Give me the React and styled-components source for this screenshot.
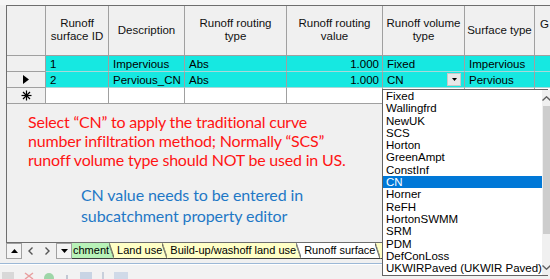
import styled, { createGlobalStyle } from "styled-components";

const GlobalStyle = createGlobalStyle`
  html, body { margin: 0; padding: 0; }
  body { background: #f0f0f0; }
`;

const COLS = "39px 63px 76px 102px 96px 82px 70px 80px";

const headers = [
  [],
  ["Runoff", "surface ID"],
  ["Description"],
  ["Runoff routing", "type"],
  ["Runoff routing", "value"],
  ["Runoff volume", "type"],
  ["Surface type"],
];

const rows = [
  { id: "1", desc: "Impervious", routing: "Abs", value: "1.000", volume: "Fixed", surface: "Impervious" },
  { id: "2", desc: "Pervious_CN", routing: "Abs", value: "1.000", volume: "CN", surface: "Pervious", current: true },
];

const volumeTypes = [
  "Fixed", "Wallingfrd", "NewUK", "SCS", "Horton", "GreenAmpt", "ConstInf", "CN",
  "Horner", "ReFH", "HortonSWMM", "SRM", "PDM", "DefConLoss", "UKWIRPaved (UKWIR Paved)",
];

const tabs = [
  { label: "chment", bg: "#b8f2b8", first: true },
  { label: "Land use", bg: "#ffffc6" },
  { label: "Build-up/washoff land use", bg: "#ffffc6" },
  { label: "Runoff surface", bg: "#ffffff" },
  { label: "", bg: "#ffffc6", hidden: true },
];

export default function App() {
  return (
    <Root>
      <GlobalStyle />
      <TopStrip />
      <GridFrame>
        <Table>
          {headers.map((lines, i) => (
            <HeadCell key={i}>
              {lines.map((l) => (
                <HeadLine key={l}>{l}</HeadLine>
              ))}
            </HeadCell>
          ))}
          <HeadCell $edge>G</HeadCell>

          {rows.map((r) => [
            <RowHead key={r.id + "h"}>
              {r.current && (
                <svg width="6" height="9" viewBox="0 0 6 9">
                  <path d="M0 0 L6 4.5 L0 9 Z" fill="#000" />
                </svg>
              )}
            </RowHead>,
            <Cell key={r.id + "a"}>{r.id}</Cell>,
            <Cell key={r.id + "b"}>{r.desc}</Cell>,
            <Cell key={r.id + "c"}>{r.routing}</Cell>,
            <Cell key={r.id + "d"} $right>{r.value}</Cell>,
            <Cell key={r.id + "e"}>
              {r.volume}
              {r.current && (
                <DropButton>
                  <svg width="5" height="3" viewBox="0 0 5 3">
                    <path d="M0 0 L5 0 L2.5 3 Z" fill="#000" />
                  </svg>
                </DropButton>
              )}
            </Cell>,
            <Cell key={r.id + "f"}>{r.surface}</Cell>,
            <Cell key={r.id + "g"} />,
          ])}

          <RowHead>
            <svg width="11" height="11" viewBox="0 0 11 11">
              <g stroke="#000" strokeWidth="1.2">
                <line x1="5.5" y1="0.5" x2="5.5" y2="10.5" />
                <line x1="0.5" y1="5.5" x2="10.5" y2="5.5" />
                <line x1="2" y1="2" x2="9" y2="9" />
                <line x1="9" y1="2" x2="2" y2="9" />
              </g>
            </svg>
          </RowHead>
          {[0, 1, 2, 3, 4, 5, 6].map((i) => (
            <Cell key={"n" + i} $blank />
          ))}
        </Table>

        <NotesArea>
          <RedNote>
            Select “CN” to apply the traditional curve
            <br />
            number infiltration method; Normally “SCS”
            <br />
            runoff volume type should NOT be used in US.
          </RedNote>
          <BlueNote>
            CN value needs to be entered in
            <br />
            subcatchment property editor
          </BlueNote>
        </NotesArea>
      </GridFrame>

      <TabBar>
        <NavBox>
          <svg width="7" height="4" viewBox="0 0 7 4">
            <path d="M0 4 L7 4 L3.5 0 Z" fill="#000" />
          </svg>
        </NavBox>
        <NavArrow>
          <svg width="5" height="8" viewBox="0 0 5 8">
            <path d="M4.5 0.5 L1 4 L4.5 7.5" fill="none" stroke="#555" strokeWidth="1.4" />
          </svg>
        </NavArrow>
        <NavArrow>
          <svg width="5" height="8" viewBox="0 0 5 8">
            <path d="M0.5 0.5 L4 4 L0.5 7.5" fill="none" stroke="#555" strokeWidth="1.4" />
          </svg>
        </NavArrow>
        <NavBox>
          <svg width="7" height="4" viewBox="0 0 7 4">
            <path d="M0 0 L7 0 L3.5 4 Z" fill="#000" />
          </svg>
        </NavBox>
        {tabs.map((t, i) => (
          <Tab key={i} $bg={t.bg} $first={t.first} $hidden={t.hidden}>
            {t.label}
          </Tab>
        ))}
      </TabBar>

      <BottomStrip>
        <Divider />
        <Toolbar>
          <ToolIcon $w={12} $c="#d8d8d8" />
          <svg width="10" height="8" viewBox="0 0 10 8">
            <path d="M1 2 L9 8 M9 2 L1 8" stroke="#e8a0a0" strokeWidth="1.5" />
          </svg>
          <svg width="10" height="8" viewBox="0 0 10 8">
            <circle cx="5" cy="7" r="5" fill="#9ed6a8" />
          </svg>
          <svg width="6" height="8" viewBox="0 0 6 8">
            <path d="M3 4 L3 8" stroke="#b0b8c8" strokeWidth="1.5" />
          </svg>
          <ToolIcon $w={12} $c="#c8d4e4" />
          <ToolIcon $w={2} $c="#c8d0dc" />
          <ToolIcon $w={14} $c="#d0dae8" />
        </Toolbar>
      </BottomStrip>

      <DropList>
        <Items>
          {volumeTypes.map((v) => (
            <Item key={v} $selected={v === "CN"}>
              {v}
            </Item>
          ))}
        </Items>
        <ScrollBar>
          <ScrollArrow>
            <svg width="9" height="5" viewBox="0 0 9 5">
              <path d="M0.5 4.5 L4.5 0.8 L8.5 4.5" fill="none" stroke="#606060" strokeWidth="1.4" />
            </svg>
          </ScrollArrow>
          <Thumb />
          <ScrollArrow>
            <svg width="9" height="5" viewBox="0 0 9 5">
              <path d="M0.5 0.5 L4.5 4.2 L8.5 0.5" fill="none" stroke="#606060" strokeWidth="1.4" />
            </svg>
          </ScrollArrow>
        </ScrollBar>
      </DropList>
    </Root>
  );
}

const Root = styled.div`
  position: relative;
  width: 550px;
  height: 279px;
  overflow: hidden;
  background: #f0f0f0;
  font-family: "Liberation Sans", Arial, sans-serif;
  font-size: 11px;
  color: #000;
  display: flex;
  flex-direction: column;
`;

const TopStrip = styled.div`
  flex: none;
  height: 5px;
  background: #f6f6f6;
`;

const GridFrame = styled.div`
  flex: none;
  box-sizing: border-box;
  margin-left: 6px;
  width: 620px;
  height: 238px;
  border: 1px solid #6e6e6e;
  border-right: none;
  display: flex;
  flex-direction: column;
`;

const Table = styled.div`
  display: grid;
  grid-template-columns: ${COLS};
  grid-template-rows: 50px 16px 16px 16px;
`;

const HeadCell = styled.div`
  box-sizing: border-box;
  background: #f0f0f0;
  border-right: 1px solid #a0a0a0;
  border-bottom: 1px solid #a0a0a0;
  display: flex;
  flex-direction: column;
  align-items: ${(p) => (p.$edge ? "flex-start" : "center")};
  justify-content: ${(p) => (p.$edge ? "flex-start" : "center")};
  padding: ${(p) => (p.$edge ? "12px 0 0 5px" : "0 2px 1px")};
  line-height: 13px;
  font-size: 11.5px;
  color: #111;
`;

const HeadLine = styled.span`
  white-space: nowrap;
`;

const RowHead = styled.div`
  box-sizing: border-box;
  background: #f0f0f0;
  border-right: 1px solid #a0a0a0;
  border-bottom: 1px solid #a0a0a0;
  display: flex;
  align-items: center;
  justify-content: center;
`;

const Cell = styled.div`
  box-sizing: border-box;
  background: ${(p) => (p.$blank ? "#ffffff" : "#16e8e1")};
  border-right: 1px solid #a0a0a0;
  border-bottom: 1px solid ${(p) => (p.$blank ? "#a0a0a0" : "#a8d8d8")};
  display: flex;
  align-items: center;
  justify-content: ${(p) => (p.$right ? "flex-end" : "space-between")};
  padding: 0 3px 0 4px;
  font-size: 11.5px;
  white-space: nowrap;
  overflow: hidden;
`;

const DropButton = styled.div`
  box-sizing: border-box;
  width: 14px;
  height: 13px;
  background: #e8e8e8;
  border: 1px solid #c8c8c8;
  display: flex;
  align-items: center;
  justify-content: center;
`;

const NotesArea = styled.div`
  flex: 1;
  padding: 8px 0 0 21px;
  font-family: Lato, "Open Sans", sans-serif;
  font-size: 16px;
`;

const RedNote = styled.div`
  color: #ff1414;
  line-height: 19px;
  letter-spacing: -0.2px;
`;

const BlueNote = styled.div`
  margin: 15px 0 0 53px;
  color: #1f78c6;
  line-height: 21px;
  letter-spacing: -0.1px;
`;

const TabBar = styled.div`
  flex: none;
  height: 16px;
  display: flex;
  align-items: stretch;
  padding-left: 6px;
`;

const NavBox = styled.div`
  box-sizing: border-box;
  width: 16px;
  background: #f4f4f4;
  border: 1px solid #a0a0a0;
  display: flex;
  align-items: center;
  justify-content: center;
`;

const NavArrow = styled.div`
  width: 17px;
  display: flex;
  align-items: center;
  justify-content: center;
`;

const Tab = styled.div`
  box-sizing: border-box;
  flex: none;
  min-width: ${(p) => (p.$hidden ? "30px" : "0")};
  margin-left: ${(p) => (p.$first ? "0" : "-5px")};
  padding: 0 5px 0 ${(p) => (p.$first ? "1px" : "8px")};
  line-height: 15px;
  font-size: 11px;
  white-space: nowrap;
  border-bottom: 1px solid #3c3c3c;
  clip-path: ${(p) =>
    p.$first
      ? "polygon(0 0, calc(100% - 5px) 0, 100% 100%, 0 100%)"
      : "polygon(0 0, calc(100% - 5px) 0, 100% 100%, 5px 100%)"};
  background:
    linear-gradient(to top right, transparent calc(50% - 1.2px), #3c3c3c 50%, transparent calc(50% + 1.2px))
      right top / 5px 100% no-repeat,
    ${(p) =>
      p.$first
        ? ""
        : "linear-gradient(to top right, transparent calc(50% - 1.2px), #3c3c3c 50%, transparent calc(50% + 1.2px)) left top / 5px 100% no-repeat,"}
    ${(p) => p.$bg};
`;

const BottomStrip = styled.div`
  flex: 1;
  padding-top: 4px;
  display: flex;
  flex-direction: column;
`;

const Divider = styled.div`
  height: 1px;
  background: #9cb8d6;
  border-bottom: 1px solid #ffffff;
`;

const Toolbar = styled.div`
  flex: 1;
  display: flex;
  align-items: flex-end;
  gap: 10px;
  padding-left: 2px;
  background: #f2f2f2;
`;

const ToolIcon = styled.div`
  width: ${(p) => p.$w}px;
  height: 7px;
  background: ${(p) => p.$c};
`;

const DropList = styled.div`
  position: absolute;
  left: 382px;
  top: 89px;
  box-sizing: border-box;
  width: 166px;
  height: 187px;
  border: 1px solid #646464;
  background: #ffffff;
  display: flex;
`;

const Items = styled.div`
  flex: 1;
  display: flex;
  flex-direction: column;
`;

const Item = styled.div`
  height: 12.3px;
  line-height: 12.3px;
  padding-left: 3px;
  font-size: 11.5px;
  white-space: nowrap;
  background: ${(p) => (p.$selected ? "#0078d7" : "transparent")};
  color: ${(p) => (p.$selected ? "#ffffff" : "#000000")};
`;

const ScrollBar = styled.div`
  width: 16px;
  background: #f0f0f0;
  display: flex;
  flex-direction: column;
`;

const ScrollArrow = styled.div`
  height: 16px;
  display: flex;
  align-items: center;
  justify-content: center;
`;

const Thumb = styled.div`
  margin: 0 1px;
  height: 128px;
  background: #cdcdcd;
  flex: none;
  margin-bottom: auto;
`;
